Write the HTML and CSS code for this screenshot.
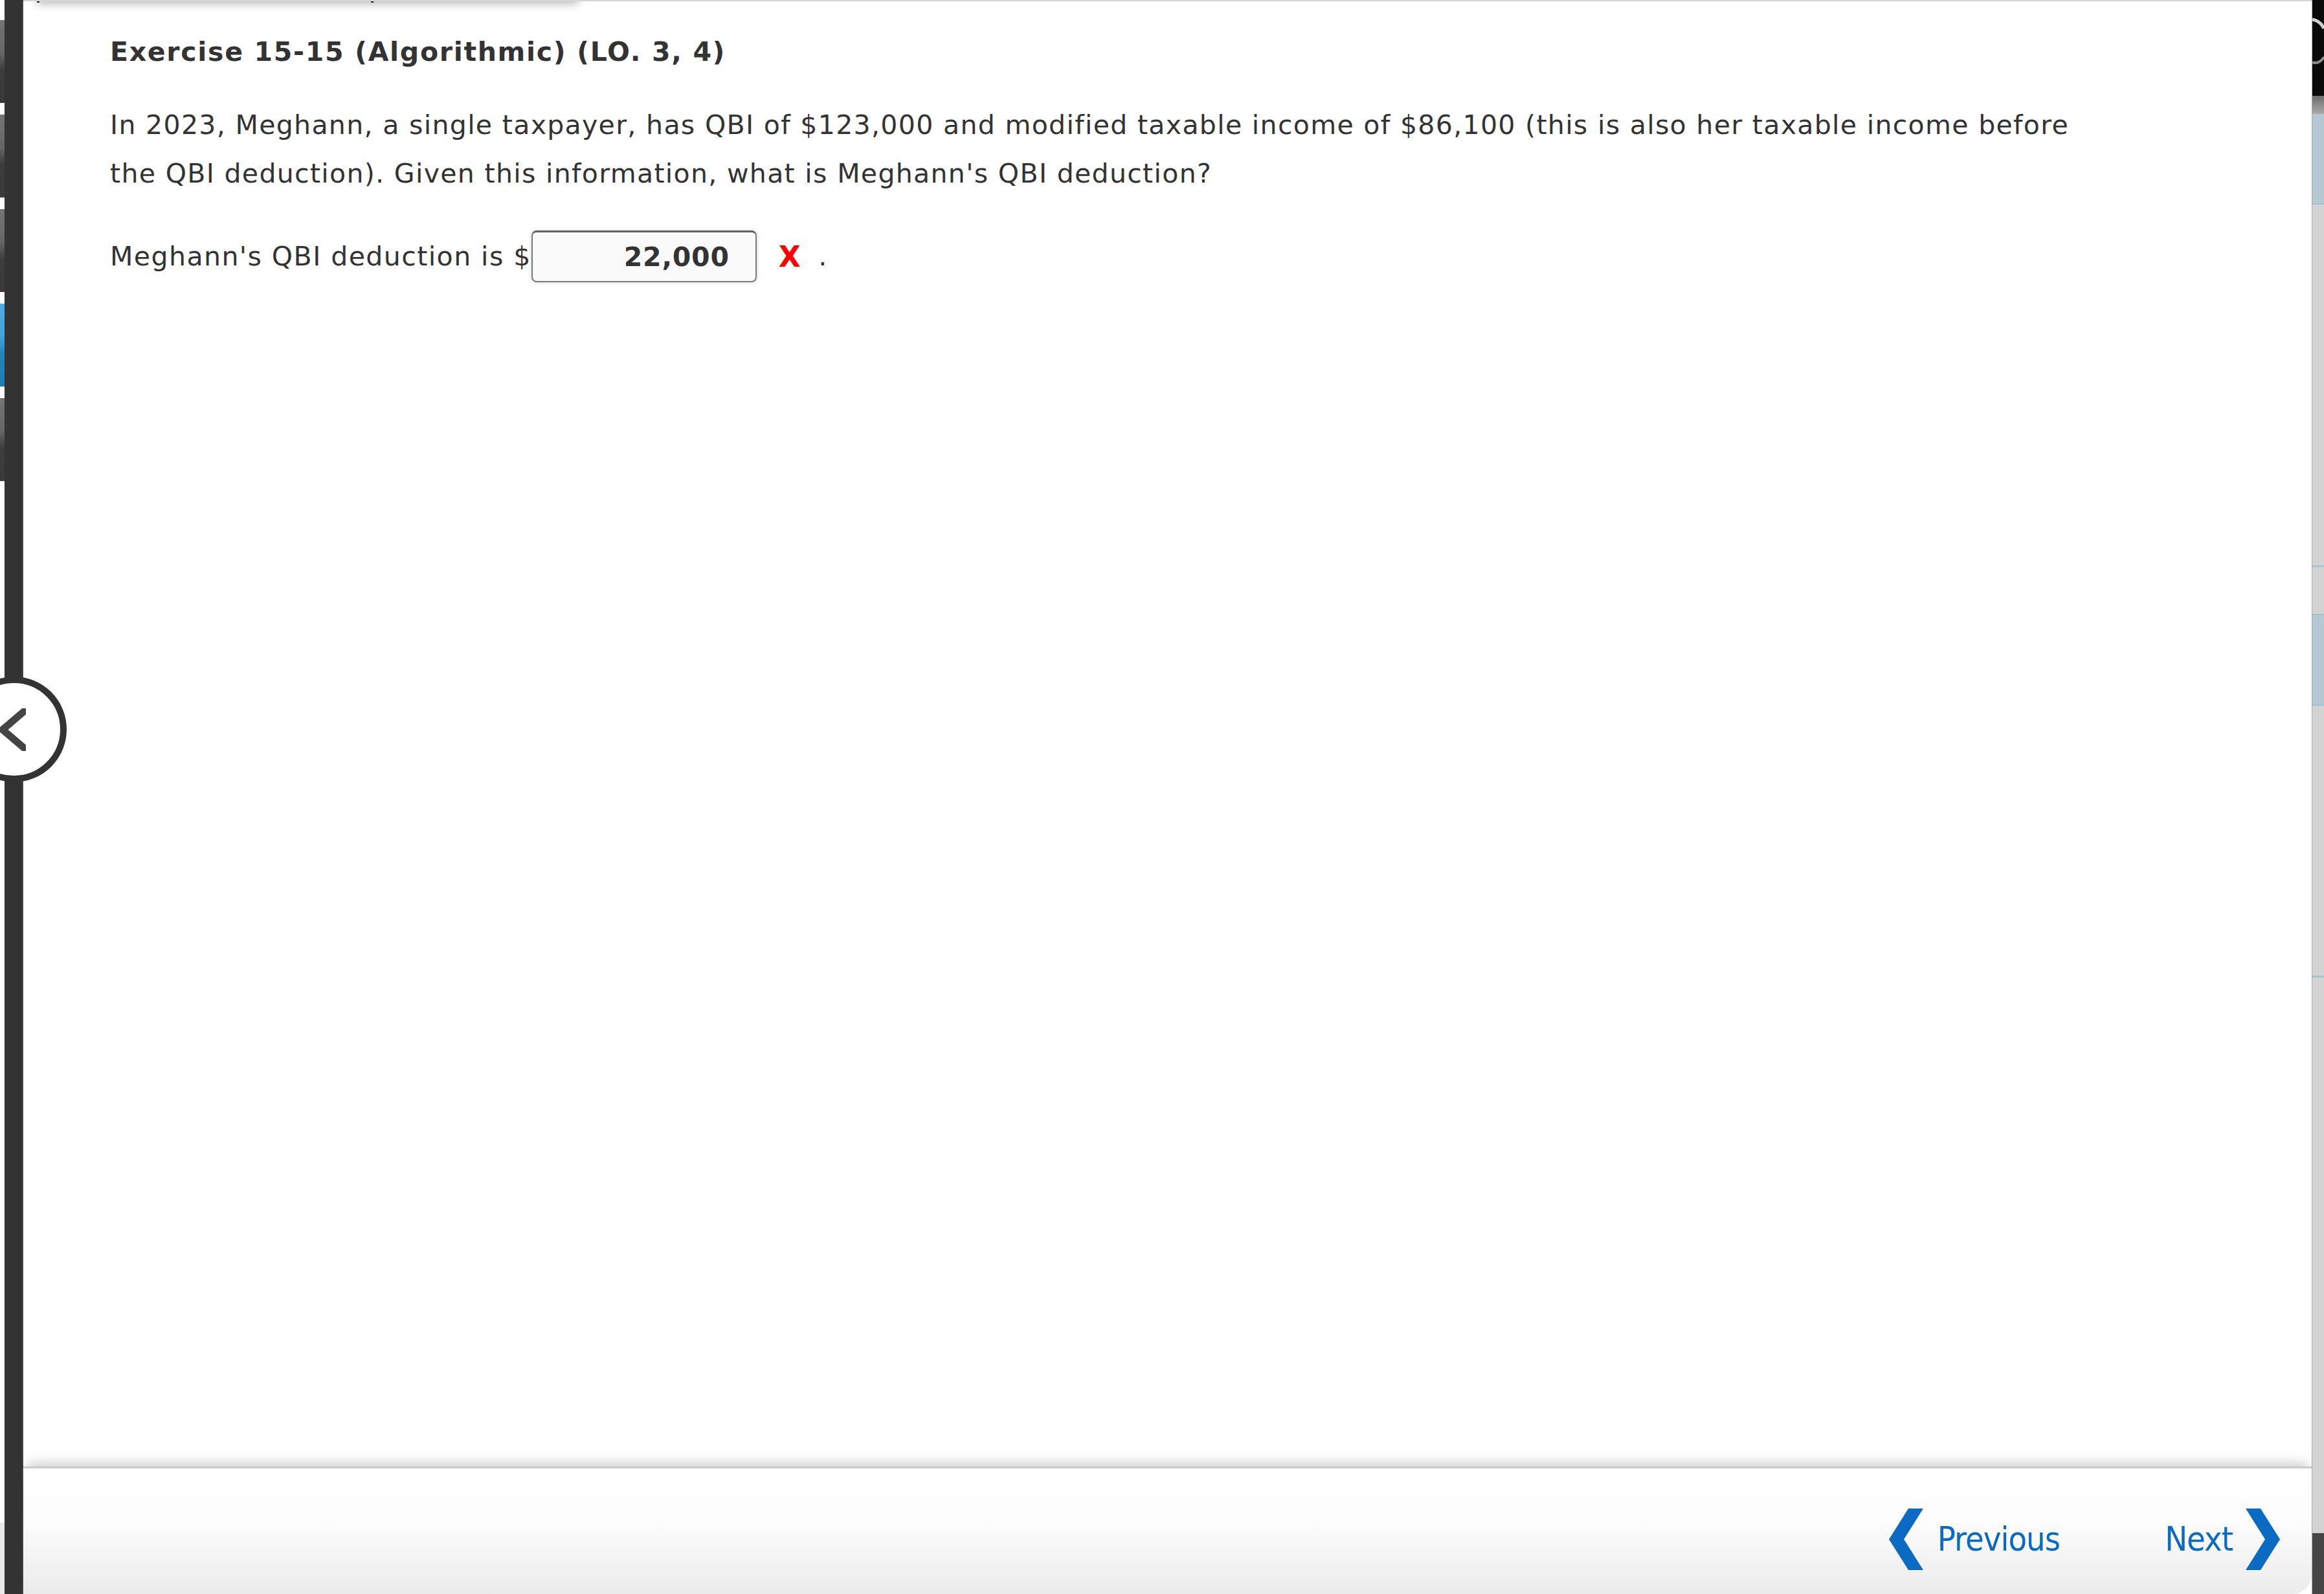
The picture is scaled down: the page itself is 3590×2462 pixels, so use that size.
FILE: index.html
```html
<!DOCTYPE html>
<html lang="en">
<head>
<meta charset="utf-8">
<title>Exercise 15-15 (Algorithmic)</title>
<link rel="stylesheet" href="styles.css">
</head>
<body>
<div class="screen">
  <div class="edge-left">
    <div class="seg white first"></div>
    <div class="seg gray"></div>
    <div class="seg white"></div>
    <div class="seg gray"></div>
    <div class="seg white"></div>
    <div class="seg gray"></div>
    <div class="seg white"></div>
    <div class="seg blue"></div>
    <div class="seg white"></div>
    <div class="seg gray"></div>
    <div class="seg white fill"></div>
    <div class="seg lightgray"></div>
  </div>
  <div class="rail"></div>
  <div class="main">
    <div class="top-popup"><span class="tick t1"></span><span class="tick t2"></span></div>
    <div class="content">
      <h1 class="title">Exercise 15-15 (Algorithmic) (LO. 3, 4)</h1>
      <p class="question">In 2023, Meghann, a single taxpayer, has QBI of $123,000 and modified taxable income of $86,100 (this is also her taxable income before the QBI deduction). Given this information, what is Meghann's QBI deduction?</p>
      <div class="answer-row">
        <span class="answer-label">Meghann's QBI deduction is $</span>
        <span class="answer-box">22,000</span>
        <span class="mark">X</span>
        <span class="period">.</span>
      </div>
    </div>
    <div class="footer">
      <a class="nav prev" href="#">
        <svg class="chev" viewBox="0 0 53 95" aria-hidden="true"><polygon points="30,0 53,0 23,47.5 53,95 30,95 0,47.5"/></svg>
        <span>Previous</span>
      </a>
      <a class="nav next" href="#">
        <span>Next</span>
        <svg class="chev" viewBox="0 0 53 95" aria-hidden="true"><polygon points="0,0 23,0 53,47.5 23,95 0,95 30,47.5"/></svg>
      </a>
    </div>
  </div>
  <div class="edge-right">
    <div class="er-black"><svg viewBox="0 0 18 148" aria-hidden="true"><path d="M0 30 Q12 32 18 44" fill="none" stroke="#d0d0d0" stroke-width="5"/><path d="M0 96 Q10 100 18 88" fill="none" stroke="#8a8a8a" stroke-width="4"/></svg></div>
    <div class="er-grad"></div>
    <div class="er-blue first"></div>
    <div class="er-gray a"></div>
    <div class="er-gray b"></div>
    <div class="er-blue second"></div>
    <div class="er-gray c"></div>
    <div class="er-gray d"></div>
    <div class="er-dark"></div>
  </div>
  <button class="collapse-btn" aria-label="Collapse">
    <svg viewBox="0 0 40 66" aria-hidden="true"><polyline points="38,4 4,33 38,62" fill="none" stroke="#444" stroke-width="11" stroke-linecap="round" stroke-linejoin="round"/></svg>
  </button>
</div>
</body>
</html>
```

FILE: styles.css
```css
html, body {
  margin: 0;
  padding: 0;
  background: #ffffff;
}

.screen {
  position: relative;
  display: flex;
  width: 3590px;
  height: 2462px;
  overflow: hidden;
  font-family: "DejaVu Sans", Verdana, sans-serif;
  color: #333333;
}

/* left edge strip */
.edge-left {
  width: 7px;
  display: flex;
  flex-direction: column;
  background: #ffffff;
}
.seg.white { height: 18px; background: #ffffff; }
.seg.white.first { height: 31px; }
.seg.gray { height: 128px; background: linear-gradient(#747474, #666666 40%, #3d3d3d 60%, #3a3a3a); }
.seg.blue { height: 128px; background: linear-gradient(#4eace4, #45a3dc 40%, #2482bd 60%, #1f7db5); }
.seg.fill { flex: 1; }
.seg.lightgray { height: 110px; background: #e9e9e9; }

.rail {
  width: 28px;
  background: #333333;
  border-right: 1px solid #5a5a5a;
}

/* main panel */
.main {
  position: relative;
  flex: 1;
  display: flex;
  flex-direction: column;
  background: #ffffff;
  border-top: 2px solid #d6d6d6;
  border-bottom-right-radius: 30px;
  overflow: hidden;
}

.top-popup {
  position: absolute;
  top: -40px;
  left: 21px;
  width: 836px;
  height: 40px;
  background: #ffffff;
  box-shadow: 0 4px 14px rgba(0, 0, 0, 0.28);
}
.tick {
  position: absolute;
  bottom: -2px;
  width: 4px;
  height: 4px;
  background: #222222;
}
.tick.t1 { left: 0; }
.tick.t2 { left: 516px; }

.content {
  flex: 1;
  padding: 41px 0 0 134px;
}

.title {
  margin: 0;
  font-size: 41px;
  font-weight: bold;
  line-height: 75px;
  color: #333333;
  letter-spacing: 1.7px;
}

.question {
  margin: 38px 0 0 0;
  max-width: 3070px;
  font-size: 41px;
  line-height: 75px;
  letter-spacing: 1.33px;
}

.answer-row {
  display: flex;
  align-items: center;
  margin-top: 50px;
  font-size: 41px;
  letter-spacing: 1.45px;
  height: 80px;
}

.answer-box {
  box-sizing: border-box;
  width: 348px;
  height: 80px;
  padding-right: 40px;
  display: flex;
  align-items: center;
  justify-content: flex-end;
  background: #fafafa;
  border: 2px solid #7a7a7a;
  border-top: 3px solid #606060;
  border-radius: 8px;
  box-shadow: 0 0 6px rgba(0, 0, 0, 0.18);
  font-weight: bold;
  letter-spacing: 0.8px;
}

.mark {
  margin-left: 34px;
  color: #ff0000;
  font-weight: bold;
  font-size: 44px;
}

.period {
  margin-left: 26px;
}

/* footer */
.footer {
  box-sizing: border-box;
  height: 197px;
  display: flex;
  align-items: center;
  justify-content: flex-end;
  gap: 162px;
  padding: 24px 49px 0 0;
  border-top: 3px solid #cccccc;
  background: linear-gradient(#ffffff, #fdfdfd 40%, #ebebeb);
  box-shadow: 0 -10px 18px -6px rgba(0, 0, 0, 0.22);
  position: relative;
}

.nav {
  display: flex;
  align-items: center;
  gap: 22px;
  color: #0b6bc2;
  text-decoration: none;
  font-family: "DejaVu Sans Condensed", "DejaVu Sans", sans-serif;
  font-size: 52px;
  letter-spacing: -1px;
}
.nav .chev {
  width: 53px;
  height: 95px;
  fill: #0b6bc2;
}
.nav.next { gap: 20px; }

/* right edge strip */
.edge-right {
  width: 18px;
  display: flex;
  flex-direction: column;
  border-left: 1px solid #a8a8a8;
  background: #d3d3d3;
}
.er-black { height: 148px; background: #0a0a0a; }
.er-black svg { display: block; width: 18px; height: 148px; }
.er-grad { height: 28px; background: linear-gradient(#6e6e6e, #a9a9a9); }
.er-blue { background: #b4c9d1; border-bottom: 2px solid #9cc3cf; }
.er-blue.first { height: 138px; }
.er-blue.second { height: 138px; border-top: 2px solid #9cc3cf; }
.er-gray { background: #d3d3d3; }
.er-gray.a { height: 557px; border-bottom: 3px solid #a9c6cf; }
.er-gray.b { height: 72px; }
.er-gray.c { height: 417px; border-bottom: 3px solid #a9c6cf; }
.er-gray.d { flex: 1; }
.er-dark { height: 94px; background: #454545; }

/* collapse button over the rail */
.collapse-btn {
  position: absolute;
  left: -60px;
  top: 1045px;
  width: 163px;
  height: 163px;
  box-sizing: border-box;
  border: 10px solid #333333;
  border-radius: 50%;
  background: #ffffff;
  padding: 0;
  display: flex;
  align-items: center;
  justify-content: flex-end;
}
.collapse-btn svg {
  width: 40px;
  height: 66px;
  margin-right: 53px;
}
```
